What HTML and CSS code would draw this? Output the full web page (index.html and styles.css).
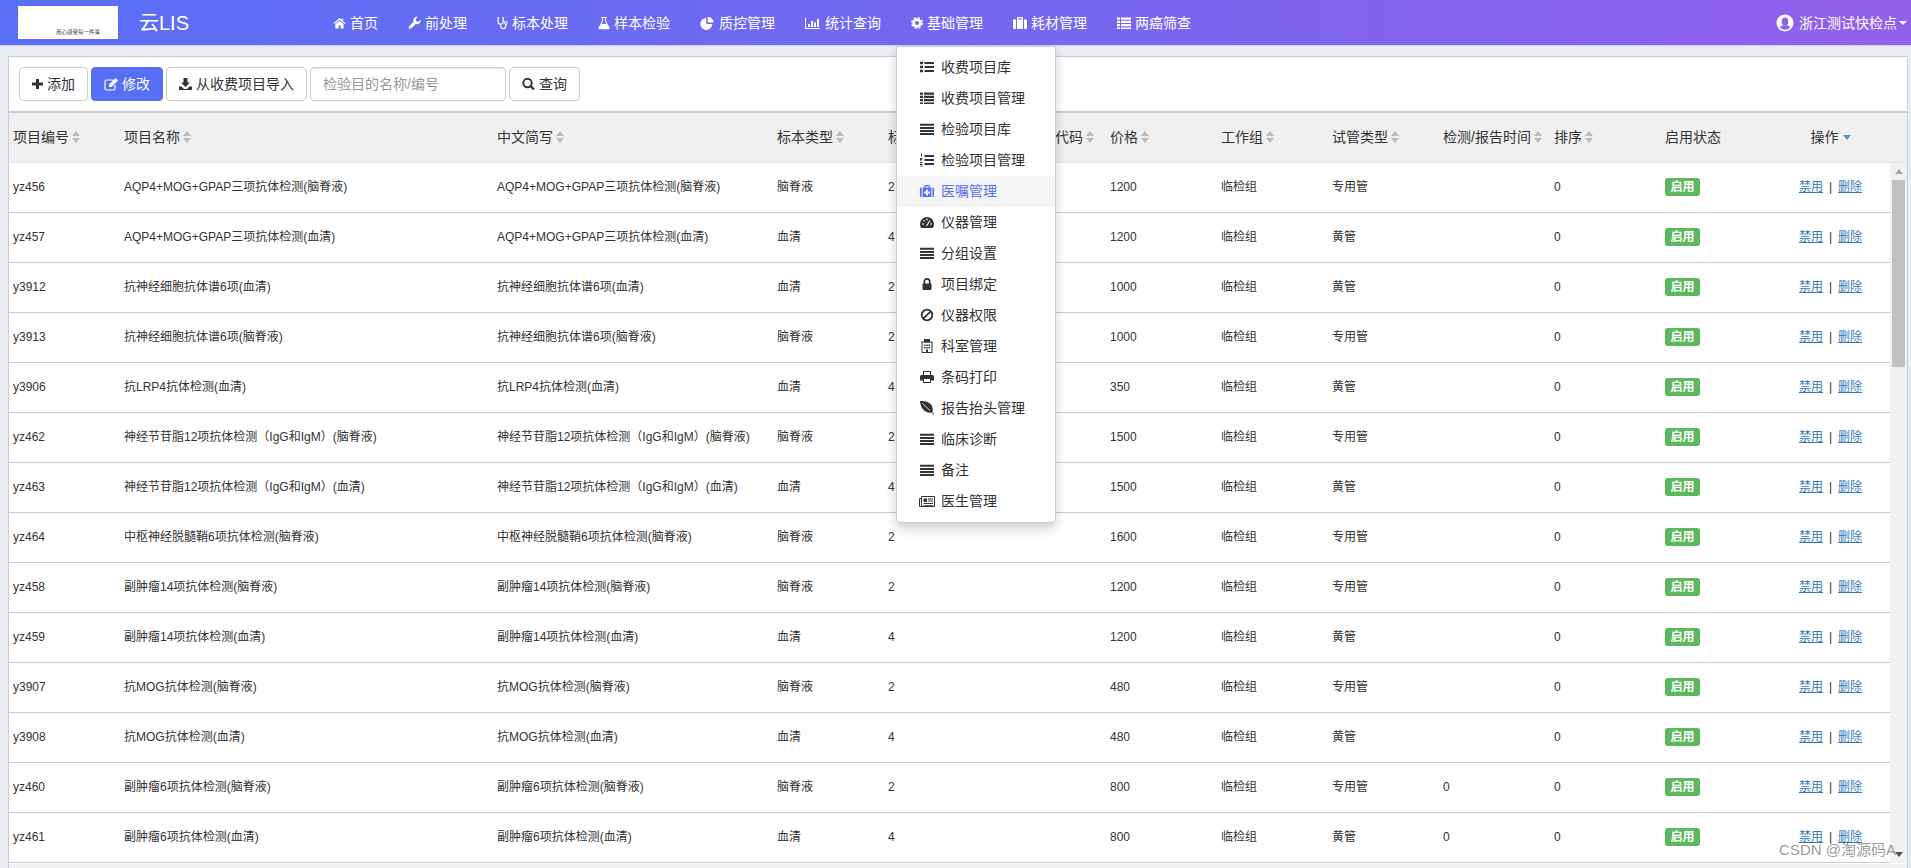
FILE: index.html
```html
<!DOCTYPE html>
<html lang="zh-CN">
<head>
<meta charset="utf-8">
<title>云LIS</title>
<link rel="stylesheet" href="styles.css">
</head>
<body>
<svg class="defs" xmlns="http://www.w3.org/2000/svg">
  <symbol id="i-home" viewBox="0 0 14 14"><path d="M7 1.5 .5 7.2l.9 1L7 3.4l5.6 4.8.9-1-2.5-2.2V2H10.300v1.500L9.700 3.200zM2.500 8.400V13H6V9.500h2V13h3.500V8.400L7 4.600z"/></symbol>
  <symbol id="i-wrench" viewBox="0 0 14 14"><path d="M13.600 3.400a4 4 0 0 1-5.200 4.700L3.300 13a1.500 1.500 0 0 1-2.200-2.200L6 5.700A4 4 0 0 1 10.600.4L8.300 2.700l.5 2.500 2.500.5zM2.200 12a.6.6 0 1 0 0-.1z"/></symbol>
  <symbol id="i-steth" viewBox="0 0 12 14"><path d="M2.500 1.500H1.200v4a2.800 2.800 0 0 0 5.600 0v-4H5.500M4 8.500v1.700a2.800 2.800 0 0 0 5.600 0V8.400" fill="none" stroke="currentColor" stroke-width="1.300"/><circle cx="9.600" cy="6.800" r="1.500" fill="none" stroke="currentColor" stroke-width="1.100"/></symbol>
  <symbol id="i-flask" viewBox="0 0 13 14"><path d="M3.500 1h6M4.800 1v4.300L1 12.200a.6.6 0 0 0 .5.900h10a.6.6 0 0 0 .5-.9L8.200 5.300V1" fill="none" stroke="currentColor" stroke-width="1.100"/><path d="M3.800 8h5.400l2.800 5H1z"/></symbol>
  <symbol id="i-pie" viewBox="0 0 15 14"><path d="M6.300 2a6 6 0 1 0 6 6h-6zM7.800 .8v5.700h5.700A5.700 5.700 0 0 0 7.800 .8z"/></symbol>
  <symbol id="i-bar" viewBox="0 0 15 14"><path d="M0 1.500h1V12h14v1H0zM3 8h2v3H3zM6 5h2v6H6zM9 6.500h2V11H9zM12 3h2v8h-2z"/></symbol>
  <symbol id="i-cog" viewBox="0 0 12 14"><circle cx="6" cy="7" r="3.400" fill="none" stroke="currentColor" stroke-width="2.600"/><circle cx="6" cy="7" r="5.300" fill="none" stroke="currentColor" stroke-width="1.400" stroke-dasharray="2.400 1.760"/></symbol>
  <symbol id="i-case" viewBox="0 0 14 14"><path fill-rule="evenodd" d="M1 3.500h2V13H1.200A1.200 1.200 0 0 1 0 11.800V4.500a1 1 0 0 1 1-1zM4 3.500V2a1 1 0 0 1 1-1h4a1 1 0 0 1 1 1v1.500V13H4zM5.300 2.300v1.200h3.400V2.300zM11 3.500h2a1 1 0 0 1 1 1v7.300a1.200 1.200 0 0 1-1.200 1.200H11z"/></symbol>
  <symbol id="i-thlist" viewBox="0 0 14 14"><path d="M0 1.500h3v2.200H0zM4 1.500h10v2.200H4zM0 4.800h3V7H0zM4 4.800h10V7H4zM0 8.100h3v2.200H0zM4 8.100h10v2.200H4zM0 11.400h3v1.600H0zM4 11.400h10v1.600H4z"/></symbol>
  <symbol id="i-bars" viewBox="0 0 14 14"><path d="M0 1.800h14v2H0zM0 4.900h14v2H0zM0 8h14v2H0zM0 11.100h14v2H0z"/></symbol>
  <symbol id="i-listul" viewBox="0 0 14 14"><path d="M0 1.800h3v2.400H0zM4.500 2h9.500v2H4.500zM0 5.800h3v2.400H0zM4.500 6h9.500v2H4.500zM0 9.800h3v2.400H0zM4.500 10h9.500v2H4.500z"/></symbol>
  <symbol id="i-listol" viewBox="0 0 14 14"><path d="M1 .5h1v3H1zM0 5h2.400v1H1.200v.6h1.200v.8H0zM0 9h2.400v1.200H0zM0 11h2.400v1.200H0zM.4 12.700h2v.8h-2zM4.500 2h9.500v2H4.500zM4.500 6h9.500v2H4.500zM4.500 10h9.500v2H4.500z"/></symbol>
  <symbol id="i-medkit" viewBox="0 0 14 14"><path fill-rule="evenodd" d="M0 4.500a1 1 0 0 1 1-1h.6V13H1a1 1 0 0 1-1-1zM4.300 3.500V2a1 1 0 0 1 1-1h3.400a1 1 0 0 1 1 1v1.500h1.700V13H2.600V3.500zM5.400 2.200v1.300h3.200V2.200zM6 5.500v2H4v2h2v2h2v-2h2v-2H8v-2zM12.400 3.500h.6a1 1 0 0 1 1 1V12a1 1 0 0 1-1 1h-.6z"/></symbol>
  <symbol id="i-gauge" viewBox="0 0 14 14"><path d="M7 2a7 7 0 0 0-7 7c0 1.500.4 2.900 1.100 4h11.800c.7-1.100 1.100-2.500 1.100-4a7 7 0 0 0-7-7z"/><path d="M7 3.500v2M3.500 5l1.200 1.300M2 9h2M12 9h-2M6.500 11 10 5.500" fill="none" stroke="#fff" stroke-width="1.100"/></symbol>
  <symbol id="i-lock" viewBox="0 0 14 14"><path d="M4.300 7V4.500a2.700 2.700 0 0 1 5.400 0V7" fill="none" stroke="currentColor" stroke-width="1.700"/><rect x="2.500" y="6.500" width="9" height="6.500" rx="1"/></symbol>
  <symbol id="i-ban" viewBox="0 0 14 14"><circle cx="7" cy="7" r="5.300" fill="none" stroke="currentColor" stroke-width="1.800"/><path d="M3.300 10.700 10.700 3.300" fill="none" stroke="currentColor" stroke-width="1.800"/></symbol>
  <symbol id="i-hospital" viewBox="0 0 14 14"><rect x="2" y="3" width="10" height="10.500" fill="none" stroke="currentColor"/><path d="M4 0h6v3.500H4zM4 5.500h1.500V7H4zM6.300 5.500h1.500V7H6.300zM8.500 5.500H10V7H8.500zM4 8h1.500v1.500H4zM6.300 8h1.500v1.500H6.300zM8.500 8H10v1.500H8.500zM6 10.500h2v3H6z"/></symbol>
  <symbol id="i-print" viewBox="0 0 14 14"><rect x="3.500" y="1.500" width="7" height="4" fill="none" stroke="currentColor"/><path d="M1.500 5h11A1.500 1.500 0 0 1 14 6.500V10.500h-14V6.500A1.500 1.500 0 0 1 1.500 5z"/><rect x="3.500" y="8.500" width="7" height="4" fill="#fff" stroke="currentColor"/></symbol>
  <symbol id="i-leaf" viewBox="0 0 14 14"><path d="M0 0C8 -.5 14.500 3.500 12.300 11.500 6 12.500 .5 8.500 0 0z"/><path d="M2.500 2.500 10 9.500" fill="none" stroke="#fff" stroke-width=".8"/><path d="M11.800 11 14 14" fill="none" stroke="currentColor" stroke-width=".8"/></symbol>
  <symbol id="i-news" viewBox="0 0 16 14"><path d="M2.500 2.500h13v10h-13zM2.500 4.500H.5v8h2" fill="none" stroke="currentColor"/><path d="M4.500 4.500h3.500v3.500H4.500zM9 4.500h5v1H9zM9 6.500h5v1H9zM4.500 9h9.500v1H4.500zM4.500 11h9.500v.8H4.500z"/></symbol>
  <symbol id="i-plus" viewBox="0 0 11 14"><path d="M4 2h3v3.600h4v3H7V12H4V8.600H0v-3h4z"/></symbol>
  <symbol id="i-edit" viewBox="0 0 14 14"><path d="M11 8v3.500A1.500 1.500 0 0 1 9.500 13h-7A1.500 1.500 0 0 1 1 11.500v-7A1.500 1.500 0 0 1 2.500 3H9" fill="none" stroke="currentColor" stroke-width="1.200"/><path d="M11.500 1 14 3.500 7.500 10H5V7.500z"/></symbol>
  <symbol id="i-down" viewBox="0 0 13 14"><path d="M4.500 1h4v4.500H11L6.500 10 2 5.500h2.500zM0 9.500h2.500L5 12h3l2.500-2.500H13V13H0z"/></symbol>
  <symbol id="i-search" viewBox="0 0 13 14"><circle cx="5.500" cy="6" r="4.200" fill="none" stroke="currentColor" stroke-width="1.900"/><path d="M8.500 9 12 12.600" fill="none" stroke="currentColor" stroke-width="2.200"/></symbol>
  <symbol id="i-sort" viewBox="0 0 8 12"><path d="M4 0 8 5H0zM0 7h8l-4 5z"/></symbol>
  <symbol id="i-user" viewBox="0 0 18 18"><path fill-rule="evenodd" d="M9 .5a8.500 8.500 0 1 1 0 17 8.500 8.500 0 0 1 0-17zM9 3.500a3.300 3.900 0 1 0 0 7.800 3.300 3.900 0 0 0 0-7.800zM3.800 13.200A6.500 6.500 0 0 0 14.200 13.200 5.500 3.200 0 0 0 3.800 13.200z"/></symbol>
</svg>

<header class="topbar">
  <div class="logo"><span class="logo-text">用心感受每一件事</span></div>
  <div class="brand">云LIS</div>
  <nav class="nav">
    <a class="nav-item"><svg class="ic" width="13" height="14"><use href="#i-home"/></svg>首页</a>
    <a class="nav-item"><svg class="ic" width="13" height="14"><use href="#i-wrench"/></svg>前处理</a>
    <a class="nav-item"><svg class="ic" width="11" height="14"><use href="#i-steth"/></svg>标本处理</a>
    <a class="nav-item"><svg class="ic" width="12" height="14"><use href="#i-flask"/></svg>样本检验</a>
    <a class="nav-item"><svg class="ic" width="15" height="14"><use href="#i-pie"/></svg>质控管理</a>
    <a class="nav-item nav-gap5"><svg class="ic" width="15" height="14"><use href="#i-bar"/></svg>统计查询</a>
    <div class="nav-item nav-open"><svg class="ic" width="12" height="14"><use href="#i-cog"/></svg>基础管理
      <ul class="menu">
        <li class="menu-item"><svg class="ic" width="14" height="14"><use href="#i-listul"/></svg>收费项目库</li>
        <li class="menu-item"><svg class="ic" width="14" height="14"><use href="#i-thlist"/></svg>收费项目管理</li>
        <li class="menu-item"><svg class="ic" width="14" height="14"><use href="#i-bars"/></svg>检验项目库</li>
        <li class="menu-item"><svg class="ic" width="14" height="14"><use href="#i-listol"/></svg>检验项目管理</li>
        <li class="menu-item menu-active"><svg class="ic" width="14" height="14"><use href="#i-medkit"/></svg>医嘱管理</li>
        <li class="menu-item"><svg class="ic" width="14" height="14"><use href="#i-gauge"/></svg>仪器管理</li>
        <li class="menu-item"><svg class="ic" width="14" height="14"><use href="#i-bars"/></svg>分组设置</li>
        <li class="menu-item"><svg class="ic" width="14" height="14"><use href="#i-lock"/></svg>项目绑定</li>
        <li class="menu-item"><svg class="ic" width="14" height="14"><use href="#i-ban"/></svg>仪器权限</li>
        <li class="menu-item"><svg class="ic" width="14" height="14"><use href="#i-hospital"/></svg>科室管理</li>
        <li class="menu-item"><svg class="ic" width="14" height="14"><use href="#i-print"/></svg>条码打印</li>
        <li class="menu-item"><svg class="ic" width="14" height="14"><use href="#i-leaf"/></svg>报告抬头管理</li>
        <li class="menu-item"><svg class="ic" width="14" height="14"><use href="#i-bars"/></svg>临床诊断</li>
        <li class="menu-item"><svg class="ic" width="14" height="14"><use href="#i-bars"/></svg>备注</li>
        <li class="menu-item menu-news"><svg class="ic" width="16" height="14"><use href="#i-news"/></svg>医生管理</li>
      </ul>
    </div>
    <a class="nav-item"><svg class="ic" width="14" height="14"><use href="#i-case"/></svg>耗材管理</a>
    <a class="nav-item"><svg class="ic" width="14" height="14"><use href="#i-thlist"/></svg>两癌筛查</a>
  </nav>
  <div class="user"><svg class="ic" width="18" height="18"><use href="#i-user"/></svg><span>浙江测试快检点</span><i class="caret"></i></div>
</header>

<main class="panel">
  <div class="toolbar">
    <button class="btn"><svg class="ic" width="11" height="14"><use href="#i-plus"/></svg>添加</button>
    <button class="btn btn-primary"><svg class="ic" width="14" height="14"><use href="#i-edit"/></svg>修改</button>
    <button class="btn"><svg class="ic" width="13" height="14"><use href="#i-down"/></svg>从收费项目导入</button>
    <input class="search" type="text" placeholder="检验目的名称/编号">
    <button class="btn"><svg class="ic" width="13" height="14"><use href="#i-search"/></svg>查询</button>
  </div>

  <div class="thead-wrap">
    <table class="grid">
      <colgroup><col class="c1"><col class="c2"><col class="c3"><col class="cn"><col class="cn"><col class="cn"><col class="cn"><col class="cn"><col class="cn"><col class="cn"><col class="cn"><col class="cn"><col class="c13"></colgroup>
      <tr class="head-row">
        <th>项目编号<svg class="sort"><use href="#i-sort"/></svg></th>
        <th>项目名称<svg class="sort"><use href="#i-sort"/></svg></th>
        <th>中文简写<svg class="sort"><use href="#i-sort"/></svg></th>
        <th>标本类型<svg class="sort"><use href="#i-sort"/></svg></th>
        <th>标本量<svg class="sort"><use href="#i-sort"/></svg></th>
        <th>收费项目代码<svg class="sort"><use href="#i-sort"/></svg></th>
        <th>价格<svg class="sort"><use href="#i-sort"/></svg></th>
        <th>工作组<svg class="sort"><use href="#i-sort"/></svg></th>
        <th>试管类型<svg class="sort"><use href="#i-sort"/></svg></th>
        <th>检测/报告时间<svg class="sort"><use href="#i-sort"/></svg></th>
        <th>排序<svg class="sort"><use href="#i-sort"/></svg></th>
        <th>启用状态</th>
        <th class="center">操作<i class="sort-desc"></i></th>
      </tr>
    </table>
  </div>

  <div class="tbody-wrap">
    <table class="grid rows">
      <colgroup><col class="c1"><col class="c2"><col class="c3"><col class="cn"><col class="cn"><col class="cn"><col class="cn"><col class="cn"><col class="cn"><col class="cn"><col class="cn"><col class="cn"><col class="c13"></colgroup>
      <tr><td>yz456</td><td>AQP4+MOG+GPAP三项抗体检测(脑脊液)</td><td>AQP4+MOG+GPAP三项抗体检测(脑脊液)</td><td>脑脊液</td><td>2</td><td></td><td>1200</td><td>临检组</td><td>专用管</td><td></td><td>0</td><td><span class="badge">启用</span></td><td class="center"><a class="link">禁用</a><span class="sep">|</span><a class="link">删除</a></td></tr>
      <tr><td>yz457</td><td>AQP4+MOG+GPAP三项抗体检测(血清)</td><td>AQP4+MOG+GPAP三项抗体检测(血清)</td><td>血清</td><td>4</td><td></td><td>1200</td><td>临检组</td><td>黄管</td><td></td><td>0</td><td><span class="badge">启用</span></td><td class="center"><a class="link">禁用</a><span class="sep">|</span><a class="link">删除</a></td></tr>
      <tr><td>y3912</td><td>抗神经细胞抗体谱6项(血清)</td><td>抗神经细胞抗体谱6项(血清)</td><td>血清</td><td>2</td><td></td><td>1000</td><td>临检组</td><td>黄管</td><td></td><td>0</td><td><span class="badge">启用</span></td><td class="center"><a class="link">禁用</a><span class="sep">|</span><a class="link">删除</a></td></tr>
      <tr><td>y3913</td><td>抗神经细胞抗体谱6项(脑脊液)</td><td>抗神经细胞抗体谱6项(脑脊液)</td><td>脑脊液</td><td>2</td><td></td><td>1000</td><td>临检组</td><td>专用管</td><td></td><td>0</td><td><span class="badge">启用</span></td><td class="center"><a class="link">禁用</a><span class="sep">|</span><a class="link">删除</a></td></tr>
      <tr><td>y3906</td><td>抗LRP4抗体检测(血清)</td><td>抗LRP4抗体检测(血清)</td><td>血清</td><td>4</td><td></td><td>350</td><td>临检组</td><td>黄管</td><td></td><td>0</td><td><span class="badge">启用</span></td><td class="center"><a class="link">禁用</a><span class="sep">|</span><a class="link">删除</a></td></tr>
      <tr><td>yz462</td><td>神经节苷脂12项抗体检测（IgG和IgM）(脑脊液)</td><td>神经节苷脂12项抗体检测（IgG和IgM）(脑脊液)</td><td>脑脊液</td><td>2</td><td></td><td>1500</td><td>临检组</td><td>专用管</td><td></td><td>0</td><td><span class="badge">启用</span></td><td class="center"><a class="link">禁用</a><span class="sep">|</span><a class="link">删除</a></td></tr>
      <tr><td>yz463</td><td>神经节苷脂12项抗体检测（IgG和IgM）(血清)</td><td>神经节苷脂12项抗体检测（IgG和IgM）(血清)</td><td>血清</td><td>4</td><td></td><td>1500</td><td>临检组</td><td>黄管</td><td></td><td>0</td><td><span class="badge">启用</span></td><td class="center"><a class="link">禁用</a><span class="sep">|</span><a class="link">删除</a></td></tr>
      <tr><td>yz464</td><td>中枢神经脱髓鞘6项抗体检测(脑脊液)</td><td>中枢神经脱髓鞘6项抗体检测(脑脊液)</td><td>脑脊液</td><td>2</td><td></td><td>1600</td><td>临检组</td><td>专用管</td><td></td><td>0</td><td><span class="badge">启用</span></td><td class="center"><a class="link">禁用</a><span class="sep">|</span><a class="link">删除</a></td></tr>
      <tr><td>yz458</td><td>副肿瘤14项抗体检测(脑脊液)</td><td>副肿瘤14项抗体检测(脑脊液)</td><td>脑脊液</td><td>2</td><td></td><td>1200</td><td>临检组</td><td>专用管</td><td></td><td>0</td><td><span class="badge">启用</span></td><td class="center"><a class="link">禁用</a><span class="sep">|</span><a class="link">删除</a></td></tr>
      <tr><td>yz459</td><td>副肿瘤14项抗体检测(血清)</td><td>副肿瘤14项抗体检测(血清)</td><td>血清</td><td>4</td><td></td><td>1200</td><td>临检组</td><td>黄管</td><td></td><td>0</td><td><span class="badge">启用</span></td><td class="center"><a class="link">禁用</a><span class="sep">|</span><a class="link">删除</a></td></tr>
      <tr><td>y3907</td><td>抗MOG抗体检测(脑脊液)</td><td>抗MOG抗体检测(脑脊液)</td><td>脑脊液</td><td>2</td><td></td><td>480</td><td>临检组</td><td>专用管</td><td></td><td>0</td><td><span class="badge">启用</span></td><td class="center"><a class="link">禁用</a><span class="sep">|</span><a class="link">删除</a></td></tr>
      <tr><td>y3908</td><td>抗MOG抗体检测(血清)</td><td>抗MOG抗体检测(血清)</td><td>血清</td><td>4</td><td></td><td>480</td><td>临检组</td><td>黄管</td><td></td><td>0</td><td><span class="badge">启用</span></td><td class="center"><a class="link">禁用</a><span class="sep">|</span><a class="link">删除</a></td></tr>
      <tr><td>yz460</td><td>副肿瘤6项抗体检测(脑脊液)</td><td>副肿瘤6项抗体检测(脑脊液)</td><td>脑脊液</td><td>2</td><td></td><td>800</td><td>临检组</td><td>专用管</td><td>0</td><td>0</td><td><span class="badge">启用</span></td><td class="center"><a class="link">禁用</a><span class="sep">|</span><a class="link">删除</a></td></tr>
      <tr><td>yz461</td><td>副肿瘤6项抗体检测(血清)</td><td>副肿瘤6项抗体检测(血清)</td><td>血清</td><td>4</td><td></td><td>800</td><td>临检组</td><td>黄管</td><td>0</td><td>0</td><td><span class="badge">启用</span></td><td class="center"><a class="link">禁用</a><span class="sep">|</span><a class="link">删除</a></td></tr>
    </table>
    <div class="vscroll">
      <div class="arrow-box"><i class="arrow-up"></i></div>
      <div class="thumb"></div>
      <div class="arrow-box arrow-bottom"><i class="arrow-down"></i></div>
    </div>
  </div>
  <div class="hscroll"></div>
</main>

<div class="watermark">CSDN @淘源码A</div>
</body>
</html>
```
FILE: styles.css
```css
* { box-sizing: border-box; }
html, body { height: 868px; overflow: hidden; }
body {
  position: relative;
  margin: 0;
  background: #e9edf2;
  color: #333;
  font: 14px/20px "Liberation Sans", "Noto Sans CJK SC", sans-serif;
}
.defs { position: absolute; width: 0; height: 0; }
.ic { display: block; flex: none; fill: currentColor; }

/* top bar */
.topbar {
  display: flex;
  align-items: center;
  height: 46px;
  padding-left: 18px;
  border-bottom: 1px solid #cdd2f2;
  background: linear-gradient(90deg, #586ff6, #9160ea);
  color: #fff;
}
.logo {
  display: flex;
  align-items: flex-end;
  justify-content: flex-end;
  width: 100px;
  height: 33px;
  padding: 0 18px 4px 0;
  background: #fff;
}
.logo-text { font-size: 5.500px; line-height: 6px; color: #444; white-space: nowrap; }
.brand { width: 179px; margin-left: 21px; font-size: 20px; }
.nav { display: flex; height: 45px; }
.nav-item { display: flex; align-items: center; gap: 4px; padding: 0 15px; }
.nav-gap5 { gap: 5px; }
.nav-open { position: relative; }
.user { display: flex; align-items: center; margin-left: auto; padding-right: 4px; }
.user .ic { margin-right: 5px; }
.caret {
  margin-left: 2px;
  border-top: 4px solid #fff;
  border-left: 4px solid transparent;
  border-right: 4px solid transparent;
}

/* dropdown */
.menu {
  position: absolute;
  top: 46px;
  left: 0;
  z-index: 10;
  width: 160px;
  margin: 0;
  padding: 5px 0;
  list-style: none;
  border: 1px solid #ccc;
  border-radius: 0 0 4px 4px;
  background: #fff;
  box-shadow: 0 6px 12px rgba(0, 0, 0, .175);
  color: #333;
}
.menu-item {
  display: flex;
  align-items: center;
  gap: 7px;
  height: 31px;
  padding: 0 0 2px 23px;
}
.menu-news { gap: 6px; padding-left: 22px; }
.menu-active { background: #f5f5f5; color: #586ff6; }

/* panel */
.panel {
  margin: 10px 3px 0 8px;
  border: 1px solid #ccc;
  background: #fff;
}
.toolbar {
  display: flex;
  gap: 3px;
  height: 56px;
  padding: 10px 10px 0;
  border-bottom: 2px solid #ccc;
}
.btn {
  display: inline-flex;
  align-items: center;
  gap: 4px;
  height: 34px;
  padding: 0 12px;
  border: 1px solid #ccc;
  border-radius: 4px;
  background: #fff;
  color: #333;
  font: inherit;
}
.btn-primary { border-color: #5570f5; background: #5570f5; color: #fff; }
.search {
  width: 196px;
  height: 34px;
  padding: 6px 12px;
  border: 1px solid #ccc;
  border-radius: 4px;
  box-shadow: inset 0 1px 1px rgba(0, 0, 0, .075);
  color: #555;
  font: inherit;
}
.search::placeholder { color: #999; opacity: 1; }

/* table */
.thead-wrap { background: #f0f0f0; border-bottom: 1px solid #e4e4e4; }
.grid { width: 1881px; border-collapse: separate; border-spacing: 0; table-layout: fixed; }
.c1 { width: 110px; }
.c2 { width: 373px; }
.c3 { width: 280px; }
.cn { width: 111px; }
.c13 { width: 119px; }
th, td { padding: 0 0 2px 5px; text-align: left; white-space: nowrap; overflow: hidden; }
th:first-child, td:first-child { padding-left: 4px; }
th { height: 49px; font-weight: normal; }
td { height: 50px; border-bottom: 1px solid #ccc; font-size: 12px; }
th.center, td.center { padding: 0 0 2px; text-align: center; }
.sort { display: inline-block; width: 8px; height: 12px; margin-left: 3px; vertical-align: -1px; fill: #bbb; }
.sort-desc {
  display: inline-block;
  margin-left: 4px;
  vertical-align: 2px;
  border-top: 5px solid #5b8ecb;
  border-left: 4px solid transparent;
  border-right: 4px solid transparent;
}
.badge {
  display: inline-block;
  width: 35px;
  height: 18px;
  border-radius: 3px;
  background: #5cb85c;
  color: #fff;
  font-weight: bold;
  line-height: 18px;
  text-align: center;
  vertical-align: middle;
}
.link { color: #337ab7; text-decoration: underline; }
.sep { margin: 0 6px; }

/* scrollbars */
.tbody-wrap { display: flex; }
.vscroll { display: flex; flex-direction: column; width: 17px; background: #f1f1f1; }
.arrow-box { display: flex; align-items: center; justify-content: center; height: 17px; }
.arrow-bottom { margin-top: auto; }
.arrow-up { border-bottom: 5px solid #a3a3a3; border-left: 4px solid transparent; border-right: 4px solid transparent; }
.arrow-down { border-top: 5px solid #505050; border-left: 4px solid transparent; border-right: 4px solid transparent; }
.thumb { height: 187px; margin: 0 2px; background: #c1c1c1; }
.hscroll { height: 17px; margin-top: 1px; background: #f1f1f1; }

.watermark {
  position: absolute;
  top: 840px;
  right: 15px;
  color: rgba(110, 110, 110, .7);
  font-size: 15px;
  white-space: nowrap;
}
```
